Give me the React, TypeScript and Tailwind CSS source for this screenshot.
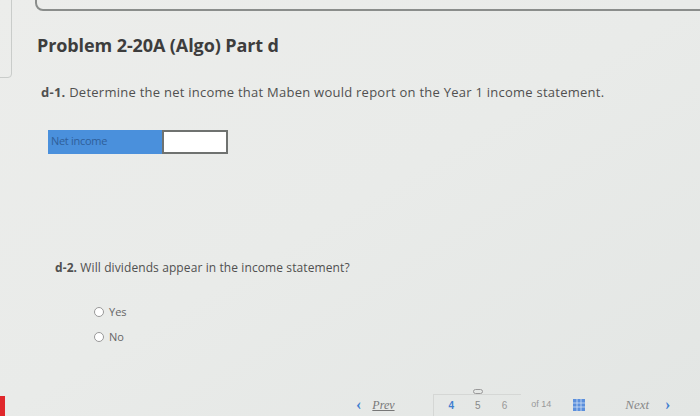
export default function App() {
    return (
        <div className="relative w-[700px] h-[416px] overflow-hidden bg-gradient-to-br from-[#ecedeb] via-[#e9ebe9] to-[#e3e6e4] text-[#444]"
             style={{fontFamily: '"Open Sans", "Liberation Sans", sans-serif'}}>
            {/* edges of the panels above, cut off by the photo */}
            <div className="absolute left-[35px] -top-[20px] w-[700px] h-[31px] border-2 border-[#8a8d8b] rounded-[8px]"/>
            <div className="absolute -left-[10px] -top-[10px] w-[22px] h-[88px] border border-[#c9ccca] rounded-[4px]"/>
            <div className="absolute left-0 top-[396px] w-[5px] h-[20px] bg-[#e0282c]"/>

            <div className="pl-[37px] pt-[32px]">
                <h1 className="text-[18px] font-bold text-[#3d3d3d] tracking-[-0.1px]">Problem 2-20A (Algo) Part d</h1>
            </div>

            <div className="pl-[41px] pt-[24px] text-[13px] text-[#505050] tracking-[0.25px]">
                <span className="font-bold">d-1.</span> Determine the net income that Maben would report on the Year 1 income statement.
            </div>

            <div className="ml-[48px] mt-[27px] flex w-[180px] h-[24px]">
                <div className="w-[114px] bg-[#4a90dc] text-[11px] text-[#2f5f9a] pl-[3px] pt-[3px] tracking-[-0.3px]">Net income</div>
                <div className="flex-1 bg-white border-2 border-[#6f7270]"/>
            </div>

            <div className="pl-[55px] pt-[105px] text-[12px] text-[#505050] tracking-[0.1px]">
                <span className="font-bold">d-2.</span> Will dividends appear in the income statement?
            </div>

            <div className="pl-[94px] pt-[27px] flex flex-col gap-[9px] text-[11px] text-[#666]">
                <label className="flex items-center gap-[5px]">
                    <span className="w-[10px] h-[10px] rounded-full border border-[#999] bg-white"/>
                    Yes
                </label>
                <label className="flex items-center gap-[5px]">
                    <span className="w-[10px] h-[10px] rounded-full border border-[#999] bg-white"/>
                    No
                </label>
            </div>

            <div className="absolute left-[356px] top-[393px] flex items-center text-[12px] text-[#777]"
                 style={{fontFamily: '"Liberation Serif", serif'}}>
                <span className="text-[#3f7fd0] font-bold text-[16px] mr-[11px]">‹</span>
                <span className="italic underline mr-[38px]">Prev</span>
                <div className="relative flex items-center gap-[21px] border-l border-t border-[#d5d7d5] pl-[15px] pr-[14px] h-[22px] text-[10px]"
                     style={{fontFamily: '"Liberation Sans", sans-serif'}}>
                    <span className="text-[#3f7fd0] font-bold">4</span>
                    <span className="text-[#888]">5</span>
                    <span className="text-[#999]">6</span>
                    <span className="absolute left-[39px] -top-[6px] w-[10px] h-[5px] border border-[#999] rounded-full"/>
                </div>
                <span className="ml-[10px] text-[9px] text-[#999]" style={{fontFamily: '"Liberation Sans", sans-serif'}}>of 14</span>
                <svg width="12" height="12" viewBox="0 0 12 12" className="ml-[22px]">
                    <rect width="12" height="12" fill="#5b8fdc"/>
                    <path d="M4 0v12M8 0v12M0 4h12M0 8h12" stroke="#cfe0f5" strokeWidth="0.8"/>
                </svg>
                <span className="ml-[40px] italic text-[13px] text-[#888]">Next</span>
                <span className="ml-[16px] text-[#3f7fd0] font-bold text-[16px]">›</span>
            </div>
        </div>
    )
}
